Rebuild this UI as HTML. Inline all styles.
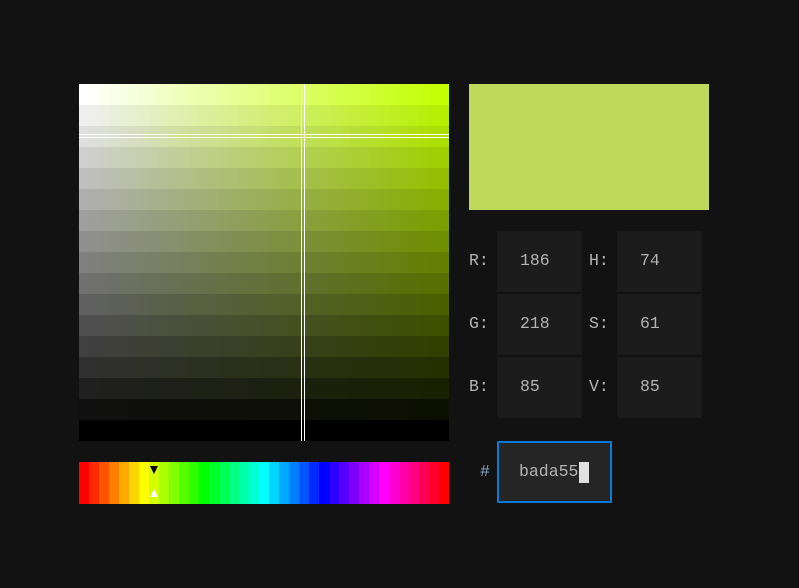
<!DOCTYPE html><html><head><style>
body{margin:0;background:#121212;width:799px;height:588px;overflow:hidden;position:relative;font-family:"Liberation Mono",monospace;font-size:16.5px;color:#b4b4b4}
.a{position:absolute}
.box{position:absolute;width:85px;height:61px;background:#1c1c1c;border:1px solid #191919;box-sizing:border-box}
.box span{position:absolute;left:22px;top:19px}
.lbl{position:absolute}
</style></head><body>
<div id="sv" class="a" style="left:79px;top:84px;width:370px;height:357px"></div>
<div class="a" style="left:79px;top:134px;width:370px;height:1px;background:#fff"></div>
<div class="a" style="left:79px;top:137px;width:370px;height:1px;background:#fff"></div>
<div class="a" style="left:301px;top:84px;width:1px;height:357px;background:#fff"></div>
<div class="a" style="left:304px;top:84px;width:1px;height:357px;background:#fff"></div>
<div id="hue" class="a" style="left:79px;top:462px;width:370px;height:42px"></div>
<svg class="a" style="left:149px;top:465px" width="10" height="34"><path d="M1 1H9L5 9Z" fill="#000"/><path d="M5 24L9 32H1Z" fill="#fff"/></svg>
<div class="a" style="left:469px;top:84px;width:240px;height:126px;background:#bcd95a"></div>
<div class="lbl" style="left:469px;top:251px">R:</div><div class="box" style="left:497px;top:231px"><span>186</span></div>
<div class="lbl" style="left:589px;top:251px">H:</div><div class="box" style="left:617px;top:231px"><span>74</span></div>
<div class="lbl" style="left:469px;top:314px">G:</div><div class="box" style="left:497px;top:294px"><span>218</span></div>
<div class="lbl" style="left:589px;top:314px">S:</div><div class="box" style="left:617px;top:294px"><span>61</span></div>
<div class="lbl" style="left:469px;top:377px">B:</div><div class="box" style="left:497px;top:357px"><span>85</span></div>
<div class="lbl" style="left:589px;top:377px">V:</div><div class="box" style="left:617px;top:357px"><span>85</span></div>
<div class="lbl" style="left:480px;top:462px;color:#8aa8c8">#</div>
<div class="a" style="left:497px;top:441px;width:115px;height:62px;box-sizing:border-box;border:2px solid #0a78d4;background:#252525">
<span class="a" style="left:20px;top:19px">bada55</span><span class="a" style="left:80px;top:19px;width:10px;height:21px;background:#e0e0e0"></span></div>
<script>
function hsv(h,s,v){var f=n=>{var k=(n+h/60)%6;return Math.round(255*v*(1-s*Math.max(0,Math.min(k,4-k,1))))};return`rgb(${f(5)},${f(3)},${f(1)})`}
var sv=document.getElementById('sv'),h='';
for(var r=0;r<17;r++)for(var c=0;c<37;c++)h+=`<div class="a" style="left:${c*10}px;top:${r*21}px;width:10px;height:21px;background:${hsv(74,c/36,1-r/16)}"></div>`;
sv.innerHTML=h;h='';
for(var c=0;c<37;c++)h+=`<div class="a" style="left:${c*10}px;top:0;width:10px;height:42px;background:${hsv((c*10)%360,1,1)}"></div>`;
document.getElementById('hue').innerHTML=h;
</script>
</body></html>
